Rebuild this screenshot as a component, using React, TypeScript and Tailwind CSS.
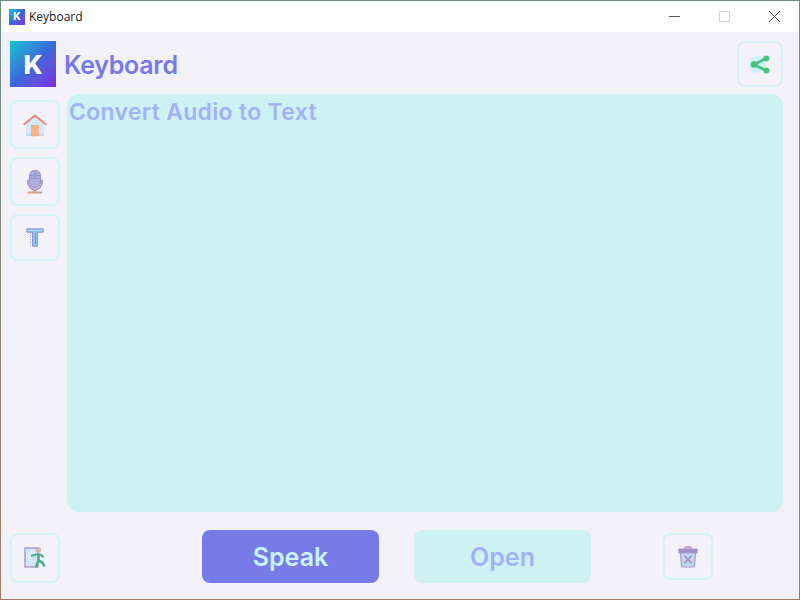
import React from 'react';

const font = { fontFamily: '"Inter", "Liberation Sans", sans-serif' };

const LogoMark: React.FC<{ textClass: string; size: string }> = ({ textClass, size }) => (
  <div className={`flex shrink-0 items-center justify-center bg-gradient-to-br from-[#0cc4d2] via-[#3a68d8] to-[#7a28e2] ${size}`}>
    <span className={`font-extrabold text-white ${textClass}`}>K</span>
  </div>
);

const IconBox: React.FC<{ className: string; children: React.ReactNode }> = ({ className, children }) => (
  <button className={`flex items-center justify-center rounded-lg border-2 border-[#d2f2f6] bg-[#f2f2f8] ${className}`}>
    {children}
  </button>
);

const HomeIcon = () => (
  <svg width="24" height="24" viewBox="0 0 24 24">
    <path d="M3 10.5 12 3 21 10.5V23H3Z" fill="#d3e9fa" />
    <rect x="3" y="20.5" width="18" height="2.5" fill="#b5dcf5" />
    <path d="M1.5 11 12 2.5 22.5 11" fill="none" stroke="#ee8a84" strokeWidth="2.2" strokeLinejoin="round" strokeLinecap="round" />
    <rect x="8.5" y="12.5" width="7" height="10.5" fill="#f8b486" stroke="#ee9e70" strokeWidth="0.6" />
  </svg>
);

const MicIcon = () => (
  <svg width="24" height="24" viewBox="0 0 24 24">
    <rect x="6.5" y="0.5" width="11" height="17" rx="5.5" fill="#abb0dc" stroke="#a48fc4" strokeWidth="1.2" />
    <path d="M7 5.5h4M7 8.5h4M13 5.5h4M13 8.5h4M12 1v8" stroke="#8e8cc6" strokeWidth="0.8" />
    <path d="M5 10v2.5a7 7 0 0 0 14 0V10" fill="none" stroke="#a48fc4" strokeWidth="1.6" />
    <path d="M4.5 10.5h2M17.5 10.5h2" stroke="#a48fc4" strokeWidth="1.6" />
    <path d="M12 19v3" stroke="#b79a92" strokeWidth="2.2" />
    <path d="M5.5 22.5h13" stroke="#c9a184" strokeWidth="1.8" strokeLinecap="round" />
  </svg>
);

const TextIcon = () => (
  <svg width="18" height="19" viewBox="0 0 18 19">
    <path d="M0.8 0.8H17.2V4.2H11.5V18.2H6.5V4.2H0.8Z" fill="#8ccbf2" stroke="#9092d2" strokeWidth="1" strokeLinejoin="round" />
    <path d="M4.5 5v14" stroke="#a9a5d6" strokeWidth="1" strokeDasharray="1 1" />
    <path d="M9.5 5v11" stroke="#4f9fe0" strokeWidth="1" />
    <path d="M2 2.5H16" stroke="#b5e0f8" strokeWidth="0.8" />
  </svg>
);

const ShareIcon = () => (
  <svg width="20" height="19" viewBox="0 0 20 19">
    <circle cx="7" cy="9.5" r="8.5" fill="#c8f3f7" />
    <path d="M16 3.5 4 9.5l12 6" fill="none" stroke="#44c47e" strokeWidth="2.8" />
    <circle cx="16.3" cy="3.5" r="3" fill="#44c47e" />
    <circle cx="16.3" cy="15.5" r="3" fill="#44c47e" />
    <circle cx="4" cy="9.5" r="3.2" fill="#44c47e" />
  </svg>
);

const ExitIcon = () => (
  <svg width="22" height="22" viewBox="0 0 22 22">
    <rect x="1" y="1" width="13" height="19" fill="#cfe4f8" stroke="#ab9cca" strokeWidth="1.5" />
    <path d="M3 9 9 3M4 13 11 5" stroke="#eef6fd" strokeWidth="1.2" />
    <circle cx="14.5" cy="3" r="2.2" fill="#e8b9a6" stroke="#a89ab2" strokeWidth="0.6" />
    <path d="M7 9 11.5 7.5h5l3 3" fill="none" stroke="#4fae8e" strokeWidth="2.2" strokeLinejoin="round" />
    <path d="M14.5 7v6.5l-2.5 7M14.5 13.5l4 2 2 4" fill="none" stroke="#4fae8e" strokeWidth="2.6" strokeLinejoin="round" />
  </svg>
);

const TrashIcon = () => (
  <svg width="20" height="22" viewBox="0 0 20 22">
    <path d="M6.5 3a3.5 2.5 0 0 1 7 0" fill="#dcb4d8" stroke="#b598cc" strokeWidth="1.2" />
    <rect x="0.8" y="3" width="18.4" height="4" fill="#9c92c6" stroke="#ab98ca" strokeWidth="0.8" />
    <path d="M2.5 7H17.5L16.5 20a1 1 0 0 1-1 1H4.5a1 1 0 0 1-1-1Z" fill="#bcd8f0" stroke="#ab98ca" strokeWidth="1.2" />
    <path d="M6.5 10 13.5 17M13.5 10 6.5 17" stroke="#ab86b8" strokeWidth="1.6" />
  </svg>
);

const App: React.FC = () => {
  return (
    <div className="h-[600px] w-[800px] overflow-hidden bg-gradient-to-b from-[#6d8b88] to-[#a07a66] p-px" style={font}>
      <div className="flex h-full flex-col bg-[#f1f1f7]">
        {/* title bar */}
        <div className="flex h-[31px] shrink-0 items-center bg-white pl-2 pr-[19px]">
          <LogoMark size="h-4 w-4" textClass="text-[10px]" />
          <span className="ml-1 text-xs text-[#1a1a1a]" style={{ fontFamily: '"Open Sans", sans-serif' }}>Keyboard</span>
          <div className="ml-auto flex items-center gap-[39px]">
            <div className="h-px w-[11px] bg-[#555]" />
            <div className="h-[11px] w-[11px] border border-[#d4d4d4]" />
            <svg width="11" height="11" viewBox="0 0 11 11">
              <path d="M0 0 11 11M11 0 0 11" stroke="#444" strokeWidth="1" />
            </svg>
          </div>
        </div>

        <div className="flex min-h-0 flex-1 flex-col pl-[9px] pr-4 pt-[9px]">
          {/* header */}
          <div className="flex h-[46px] shrink-0 items-center">
            <LogoMark size="h-[46px] w-[46px]" textClass="text-[26px]" />
            <span className="ml-2 pt-[3px] text-[25px] font-semibold tracking-[-0.3px] text-[#7779e8]">Keyboard</span>
            <IconBox className="ml-auto h-[46px] w-[46px]">
              <ShareIcon />
            </IconBox>
          </div>

          {/* main */}
          <div className="mt-[7px] flex h-[418px] shrink-0">
            <div className="mt-[6px] flex w-[50px] shrink-0 flex-col">
              <IconBox className="h-[49px] w-[50px]"><HomeIcon /></IconBox>
              <IconBox className="mt-2 h-[49px] w-[50px]"><MicIcon /></IconBox>
              <IconBox className="mt-2 h-[47px] w-[50px]"><TextIcon /></IconBox>
            </div>
            <div className="ml-[7px] flex-1 rounded-xl bg-[#ccf2f3] px-[2px] pt-[2px]">
              <p className="text-[23px] font-semibold leading-8 tracking-[0.3px] text-[#a3b1f6]">Convert Audio to Text</p>
            </div>
          </div>

          {/* footer */}
          <div className="mt-[18px] flex h-[53px] shrink-0 items-start">
            <IconBox className="mt-[3px] h-[50px] w-[50px]"><ExitIcon /></IconBox>
            <button className="ml-[142px] flex h-[53px] w-[177px] items-center justify-center rounded-lg bg-[#777be8] pt-[3px] text-[25px] font-semibold text-[#c8f3f9]">
              Speak
            </button>
            <button className="ml-[35px] flex h-[53px] w-[177px] items-center justify-center rounded-lg bg-[#ccf2f3] pt-[3px] text-[25px] font-semibold text-[#a3b1f6]">
              Open
            </button>
            <IconBox className="ml-[72px] mt-[3px] h-[47px] w-[50px]"><TrashIcon /></IconBox>
          </div>
        </div>
      </div>
    </div>
  );
};

export default App;
